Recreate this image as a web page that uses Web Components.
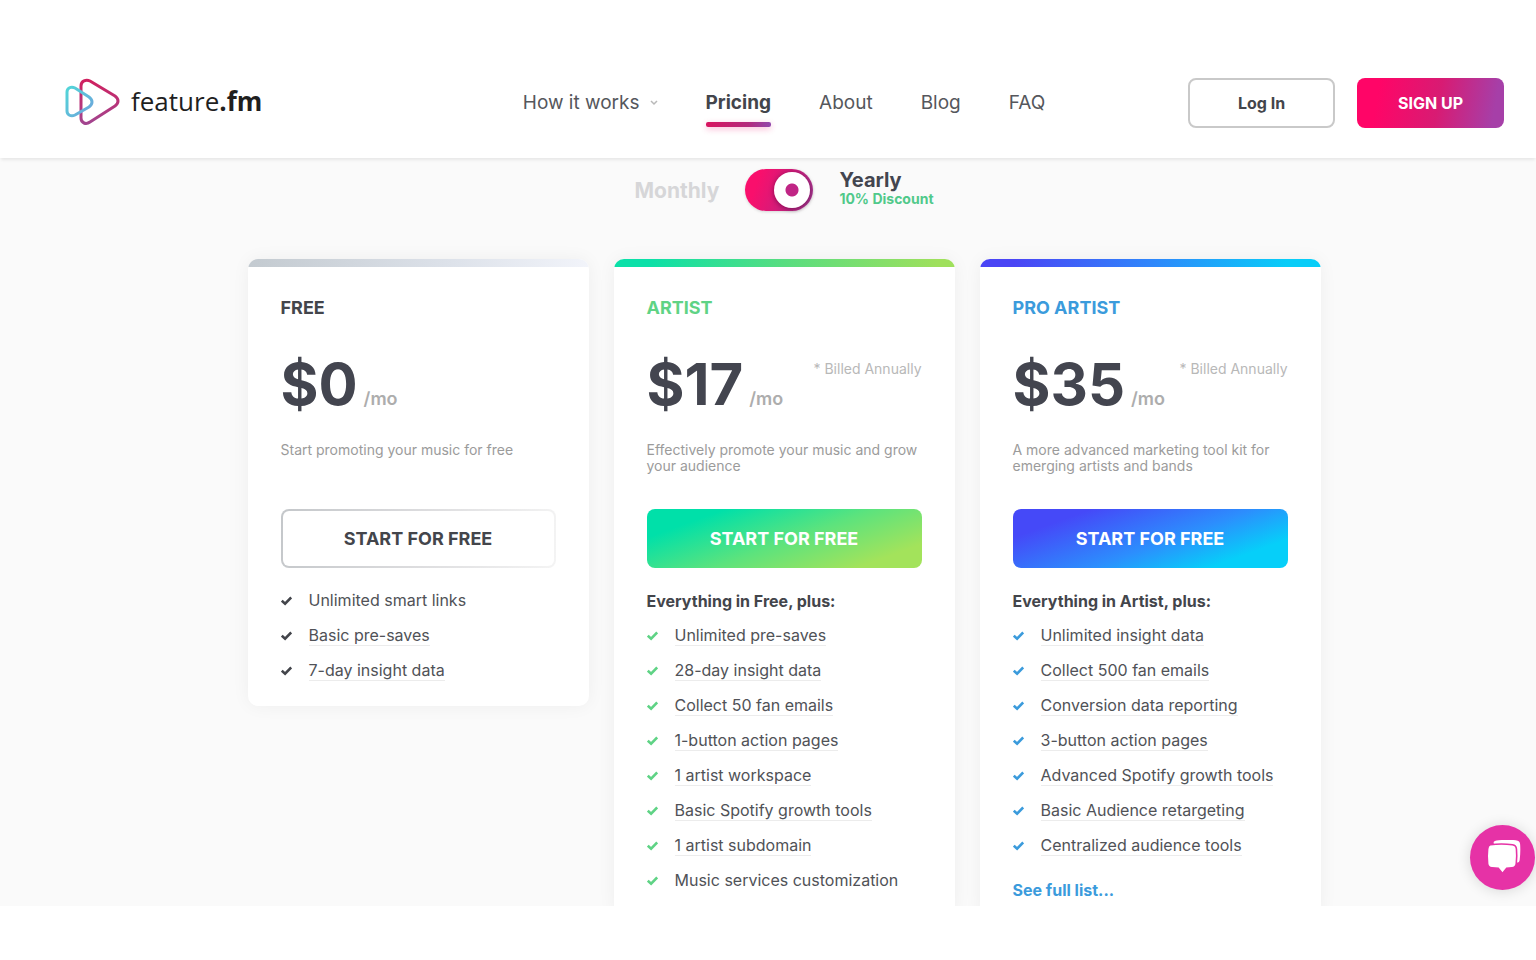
<!DOCTYPE html>
<html lang="en">
<head>
<meta charset="utf-8">
<meta name="viewport" content="width=device-width, initial-scale=1">
<title>Pricing - feature.fm</title>
<style>
  body {
    margin: 0;
    background: #fff;
    color: #43454f;
    font-family: Inter, "Open Sans", sans-serif;
    font-size: 16px;
  }
</style>
</head>
<body>
<pricing-page>
  <site-header slot="header">
    <nav-link href="#how" menu>How it works</nav-link>
    <nav-link href="#pricing" active>Pricing</nav-link>
    <nav-link href="#about">About</nav-link>
    <nav-link href="#blog">Blog</nav-link>
    <nav-link href="#faq">FAQ</nav-link>
  </site-header>

  <billing-toggle></billing-toggle>

  <plan-list>
    <plan-card theme="free">
      <span slot="name">FREE</span>
      <span slot="price">$0</span>
      <span slot="description">Start promoting your music for free</span>
      <plan-feature plain>Unlimited smart links</plan-feature>
      <plan-feature>Basic pre-saves</plan-feature>
      <plan-feature>7-day insight data</plan-feature>
    </plan-card>

    <plan-card theme="artist">
      <span slot="name">ARTIST</span>
      <span slot="price">$17</span>
      <span slot="note">* Billed Annually</span>
      <span slot="description">Effectively promote your music and grow your audience</span>
      <span slot="intro">Everything in Free, plus:</span>
      <plan-feature>Unlimited pre-saves</plan-feature>
      <plan-feature>28-day insight data</plan-feature>
      <plan-feature>Collect 50 fan emails</plan-feature>
      <plan-feature>1-button action pages</plan-feature>
      <plan-feature>1 artist workspace</plan-feature>
      <plan-feature>Basic Spotify growth tools</plan-feature>
      <plan-feature>1 artist subdomain</plan-feature>
      <plan-feature plain>Music services customization</plan-feature>
    </plan-card>

    <plan-card theme="pro">
      <span slot="name">PRO ARTIST</span>
      <span slot="price">$35</span>
      <span slot="note">* Billed Annually</span>
      <span slot="description">A more advanced marketing tool kit for emerging artists and bands</span>
      <span slot="intro">Everything in Artist, plus:</span>
      <plan-feature>Unlimited insight data</plan-feature>
      <plan-feature>Collect 500 fan emails</plan-feature>
      <plan-feature>Conversion data reporting</plan-feature>
      <plan-feature>3-button action pages</plan-feature>
      <plan-feature>Advanced Spotify growth tools</plan-feature>
      <plan-feature>Basic Audience retargeting</plan-feature>
      <plan-feature>Centralized audience tools</plan-feature>
      <more-link slot="more" href="#full-list">See full list...</more-link>
    </plan-card>
  </plan-list>

  <chat-launcher slot="chat"></chat-launcher>
</pricing-page>

<script>
/**
 * Registers a custom element whose shadow root is cloned from the markup.
 */
function define (name, markup, setup) {
  const template = document.createElement('template')
  template.innerHTML = markup

  window.customElements.define(name, class extends HTMLElement {
    constructor () {
      super()
      this.attachShadow({ mode: 'open' })
      this.shadowRoot.appendChild(template.content.cloneNode(true))
    }

    connectedCallback () {
      if (setup) setup(this, this.shadowRoot)
    }
  })
}

define('pricing-page', `
  <style>
    :host {
      display: flex;
      flex-direction: column;
      box-sizing: border-box;
      height: 100vh;
      padding: 48px 0 54px;
      position: relative;
    }
    main {
      flex: 1;
      min-height: 0;
      overflow: hidden;
      background: #fafafa;
      padding: 10px 32px 0 64px;
    }
    .chat {
      position: absolute;
      right: 1px;
      bottom: 70px;
      z-index: 2;
    }
  </style>
  <slot name="header"></slot>
  <main><slot></slot></main>
  <div class="chat"><slot name="chat"></slot></div>
`)

define('site-header', `
  <style>
    :host {
      display: grid;
      grid-template-columns: 1fr auto 1fr;
      align-items: center;
      height: 110px;
      padding: 0 32px 0 64px;
      background: #fff;
      box-shadow: 0 3px 3px -1px rgba(0, 0, 0, 0.08);
      position: relative;
      z-index: 1;
    }
    nav {
      display: flex;
      gap: 48px;
    }
    .actions {
      display: flex;
      justify-content: flex-end;
      gap: 22px;
    }
    button {
      box-sizing: border-box;
      width: 147px;
      height: 50px;
      border: 2px solid #c9c9c9;
      border-radius: 8px;
      background: #fff;
      color: #43454b;
      font: 700 16px Inter, sans-serif;
      cursor: pointer;
    }
    button.primary {
      border: none;
      background: linear-gradient(100deg, #ff0567 15%, #d81b73 55%, #a63fa8 92%);
      color: #fff;
    }
  </style>
  <brand-logo></brand-logo>
  <nav><slot></slot></nav>
  <div class="actions">
    <button type="button">Log In</button>
    <button type="button" class="primary">SIGN UP</button>
  </div>
`)

define('brand-logo', `
  <style>
    :host { display: block; }
    a {
      display: inline-flex;
      align-items: center;
      gap: 10px;
      color: #1f1f1f;
      text-decoration: none;
      font: 400 26px/36px "Open Sans", sans-serif;
    }
    svg { display: block; }
    b { font-weight: 700; }
  </style>
  <a href="#home">
    <svg width="57" height="48" viewBox="0 0 57 48" fill="none" stroke-width="3" stroke-linejoin="round" aria-hidden="true">
      <defs>
        <linearGradient id="pink" x1="0" y1="0" x2="0" y2="1">
          <stop offset="0" stop-color="#d0205f"/>
          <stop offset="1" stop-color="#a2458f"/>
        </linearGradient>
        <linearGradient id="cyan" x1="0" y1="0" x2="1" y2="1">
          <stop offset="0" stop-color="#52d6d8"/>
          <stop offset="1" stop-color="#6fa3dc"/>
        </linearGradient>
      </defs>
      <path stroke="url(#pink)" d="M17 9c0-5 5-7 9-5l25 15c4 3 4 7 0 10L26 45c-4 3-9 1-9-4z"/>
      <path stroke="url(#cyan)" d="M3 15c0-4 4-6 8-4l14 9c4 3 4 7 0 10l-14 8c-4 2-8 0-8-4z"/>
    </svg>
    <span>feature<b>.fm</b></span>
  </a>
`)

define('nav-link', `
  <style>
    :host { display: block; }
    a {
      display: flex;
      align-items: center;
      gap: 10px;
      position: relative;
      color: #55575c;
      font-size: 19px;
      line-height: 24px;
      text-decoration: none;
      white-space: nowrap;
    }
    svg { display: none; }
    :host([menu]) svg { display: block; }
    :host([active]) a {
      color: #43454b;
      font-weight: 700;
    }
    :host([active]) a::after {
      content: "";
      position: absolute;
      left: 0;
      right: 0;
      bottom: -12px;
      height: 5px;
      border-radius: 2px;
      background: linear-gradient(90deg, #d8145f, #b32a7c 65%, #9149ad);
      box-shadow: 0 2px 6px rgba(240, 20, 110, 0.3);
    }
  </style>
  <a>
    <slot></slot>
    <svg width="8" height="6" viewBox="0 0 8 6" fill="none" stroke="#b9b9b9" stroke-width="1.5" aria-hidden="true"><path d="M1 1l3 3 3-3"/></svg>
  </a>
`, (host, root) => {
  root.querySelector('a').href = host.getAttribute('href')
})

define('billing-toggle', `
  <style>
    :host {
      display: flex;
      justify-content: center;
      align-items: center;
      gap: 26px;
      height: 44px;
      font-size: 20px;
      font-weight: 700;
    }
    .monthly {
      color: #d6d6d8;
      font-size: 21px;
    }
    .yearly {
      display: flex;
      flex-direction: column;
      line-height: 20px;
      padding-bottom: 2px;
    }
    small {
      color: #50c98a;
      font-size: 14px;
      line-height: 18px;
    }
    input {
      appearance: none;
      display: flex;
      align-items: center;
      box-sizing: border-box;
      width: 68px;
      height: 42px;
      margin: 0;
      padding: 3px;
      border-radius: 21px;
      background: linear-gradient(110deg, #f90f6c 20%, #cf1d7b 60%, #9c3a92);
      box-shadow: 0 1px 3px rgba(0, 0, 0, 0.15);
      cursor: pointer;
    }
    input::before {
      content: "";
      width: 36px;
      height: 36px;
      border-radius: 50%;
      background: radial-gradient(circle, #c02585 6px, #fff 7px);
      box-shadow: 0 1px 5px rgba(70, 0, 50, 0.6);
    }
    input:checked::before { margin-left: auto; }
  </style>
  <label class="monthly" for="yearly">Monthly</label>
  <input id="yearly" type="checkbox" role="switch" checked>
  <label class="yearly" for="yearly">Yearly <small>10% Discount</small></label>
`)

define('plan-list', `
  <style>
    :host {
      display: grid;
      grid-template-columns: repeat(3, minmax(0, 1fr));
      align-items: start;
      gap: 25px;
      max-width: 1073px;
      margin: 47px auto 0;
    }
  </style>
  <slot></slot>
`)

define('plan-card', `
  <style>
    :host {
      --accent: #43454b;
      --bar: linear-gradient(90deg, #c3cad0, #dde2ea 60%, #f2f4fa);
      display: block;
      border-radius: 10px;
      overflow: hidden;
      background: #fff;
      box-shadow: 0 0 18px rgba(0, 0, 0, 0.05);
    }
    :host([theme="artist"]) {
      --accent: #5fd385;
      --bar: linear-gradient(90deg, #0be0a8 10%, #58dd80 50%, #9fe05c 95%);
      --fill: linear-gradient(160deg, #00e0a9 18%, #5ce37d 52%, #a3e35b 85%);
    }
    :host([theme="pro"]) {
      --accent: #3b9bdc;
      --bar: linear-gradient(90deg, #4a45f5 10%, #2f86fb 50%, #08cdf8 90%);
      --fill: linear-gradient(160deg, #4549f8 18%, #2c8efd 55%, #06cff9 82%);
    }
    .bar {
      height: 8px;
      background: var(--bar);
    }
    .body {
      display: flex;
      flex-direction: column;
      padding: 28px 33px 18px;
    }
    h2 {
      margin: 0;
      color: var(--accent);
      font-size: 18px;
      line-height: 26px;
    }
    .cost {
      display: flex;
      align-items: baseline;
      gap: 6px;
      margin-top: 29px;
      height: 68px;
      line-height: 68px;
    }
    .price {
      font-size: 58px;
      font-weight: 700;
    }
    .per {
      color: #adadad;
      font-size: 18px;
      font-weight: 600;
    }
    .note {
      align-self: flex-start;
      margin: 10px 0 0 auto;
      color: #b8b8b8;
      font-size: 14px;
      line-height: 18px;
    }
    p {
      margin: 24px 0 0;
      min-height: 32px;
      color: #9b9b9b;
      font-size: 14px;
      line-height: 16px;
    }
    button {
      height: 59px;
      margin-top: 35px;
      border: none;
      border-radius: 8px;
      background: var(--fill);
      color: #fff;
      font: 700 18px Inter, sans-serif;
      cursor: pointer;
    }
    :host([theme="free"]) button {
      border: 2px solid transparent;
      background:
        linear-gradient(#fff, #fff) padding-box,
        linear-gradient(100deg, #c4c7ca, #dcdcde 50%, #f4f4f4) border-box;
      color: #43454b;
    }
    .features {
      display: flex;
      flex-direction: column;
      margin-top: 15px;
    }
    .intro {
      color: #43454b;
      font-size: 16px;
      font-weight: 700;
    }
    .intro ::slotted(span) {
      display: block;
      padding-top: 2px;
      line-height: 33px;
    }
  </style>
  <div class="bar"></div>
  <div class="body">
    <h2><slot name="name"></slot></h2>
    <div class="cost">
      <span class="price"><slot name="price"></slot></span>
      <span class="per">/mo</span>
      <span class="note"><slot name="note"></slot></span>
    </div>
    <p><slot name="description"></slot></p>
    <button type="button">START FOR FREE</button>
    <div class="features">
      <div class="intro"><slot name="intro"></slot></div>
      <slot></slot>
    </div>
    <slot name="more"></slot>
  </div>
`)

define('plan-feature', `
  <style>
    :host {
      display: flex;
      align-items: center;
      gap: 17px;
      height: 35px;
      color: #505257;
      font-size: 16px;
      line-height: 19px;
      white-space: nowrap;
    }
    svg {
      flex: none;
      stroke: var(--accent);
    }
    span {
      border-bottom: 1px solid #ececec;
    }
    :host([plain]) span {
      border-color: transparent;
    }
  </style>
  <svg width="11" height="10" viewBox="0 0 11 10" fill="none" stroke-width="2.6" aria-hidden="true"><path d="M0.8 4.6l3.3 3L10.2 1.4"/></svg>
  <span><slot></slot></span>
`)

define('more-link', `
  <style>
    :host { display: block; }
    a {
      display: inline-block;
      margin-top: 15px;
      color: #3b9bdc;
      font-size: 16px;
      font-weight: 700;
      line-height: 24px;
      text-decoration: none;
    }
  </style>
  <a><slot></slot></a>
`, (host, root) => {
  root.querySelector('a').href = host.getAttribute('href')
})

define('chat-launcher', `
  <style>
    :host { display: block; }
    button {
      display: grid;
      place-items: center;
      width: 65px;
      height: 65px;
      padding: 0;
      border: none;
      border-radius: 50%;
      background: #e632a6;
      box-shadow: 0 1px 14px rgba(0, 0, 0, 0.14);
      cursor: pointer;
    }
  </style>
  <button type="button" aria-label="Open chat">
    <svg width="36" height="36" viewBox="0 0 34 34" aria-hidden="true">
      <path fill="#fff" d="M8 3c0-2 2-2.500 5-2.700 6-.5 12-.4 16 0 3 .3 4 1.700 4.200 4 .3 5 .2 9-.4 14-.2 2-1 3-3 3z"/>
      <path fill="#fff" stroke="#e632a6" stroke-width="1.5" d="M5 4.500c7-1 14-1 21 0 2.500.4 3.500 1.500 3.700 4 .5 5 .4 9-.2 14-.3 2.500-1.500 3.500-4 3.700l-5 .4-4 5-4-5-6-.4c-2.500-.2-3.700-1.200-4-3.700-.6-5-.6-9 0-14 .3-2.500 1-3.600 2.500-4z"/>
    </svg>
  </button>
`)
</script>
</body>
</html>
